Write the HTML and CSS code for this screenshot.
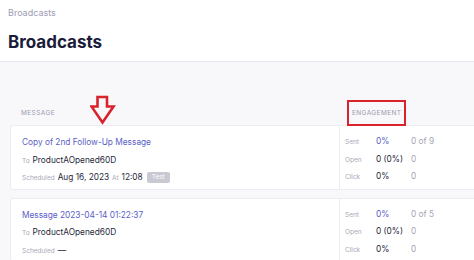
FILE: index.html
```html
<!DOCTYPE html>
<html>

<head>
    <title>Broadcasts</title>
    <link rel="stylesheet" href="styles.css">
</head>

<body>
    <div class="page-header">
        <div class="breadcrumb">Broadcasts</div>
        <h1>Broadcasts</h1>
    </div>

    <div class="content">
        <div class="table-head">
            <div class="col-message">Message</div>
            <div class="col-engagement"><span class="marked">Engagement</span></div>
            <svg class="arrow" width="28" height="34" viewBox="0 0 28 34">
                <path d="M7.5 3 H17 V12.5 H23.5 L12.5 28.5 L1.5 12.5 H7.5 Z" fill="none" stroke="#d8222c" stroke-width="2.6" stroke-linejoin="miter"/>
            </svg>
        </div>

        <div class="card">
            <div class="col-message">
                <div class="row"><a class="msg-title" href="#">Copy of 2nd Follow-Up Message</a></div>
                <div class="row"><span class="label">To</span> <span class="value">ProductAOpened60D</span></div>
                <div class="row">
                    <span class="label">Scheduled</span> <span class="value">Aug 16, 2023</span>
                    <span class="label">At</span> <span class="value">12:08</span>
                    <span class="badge">Test</span>
                </div>
            </div>
            <div class="col-engagement">
                <div class="stat"><span class="label">Sent</span><span class="pct blue">0%</span><span class="count">0 of 9</span></div>
                <div class="stat"><span class="label">Open</span><span class="pct">0 (0%)</span><span class="count">0</span></div>
                <div class="stat"><span class="label">Click</span><span class="pct">0%</span><span class="count">0</span></div>
            </div>
        </div>

        <div class="card">
            <div class="col-message">
                <div class="row"><a class="msg-title" href="#">Message 2023-04-14 01:22:37</a></div>
                <div class="row"><span class="label">To</span> <span class="value">ProductAOpened60D</span></div>
                <div class="row"><span class="label">Scheduled</span> <span class="value">&mdash;</span></div>
            </div>
            <div class="col-engagement">
                <div class="stat"><span class="label">Sent</span><span class="pct blue">0%</span><span class="count">0 of 5</span></div>
                <div class="stat"><span class="label">Open</span><span class="pct">0 (0%)</span><span class="count">0</span></div>
                <div class="stat"><span class="label">Click</span><span class="pct">0%</span><span class="count">0</span></div>
            </div>
        </div>
    </div>
</body>

</html>
```

FILE: styles.css
```css
body {
    margin: 0;
    font-family: Inter, "Noto Sans", sans-serif;
    background-color: #f8f8fb;
    overflow: hidden;
}

.page-header {
    height: 62px;
    box-sizing: border-box;
    padding: 7px 8px 0;
    background-color: #ffffff;
    border-bottom: 1px solid #e9e9ee;
}

.breadcrumb {
    font-size: 9px;
    line-height: 12px;
    color: #9c9cb2;
}

h1 {
    margin: 12px 0 0;
    font-size: 17px;
    line-height: 22px;
    font-weight: 700;
    color: #1b1c3a;
}

.content {
    padding: 39px 0 0 10px;
}

.table-head {
    position: relative;
    display: flex;
    align-items: center;
    height: 24px;
    font-size: 6.5px;
    letter-spacing: 0.4px;
    text-transform: uppercase;
    color: #9a9aae;
}

.table-head .col-message {
    width: 329px;
    padding-left: 11px;
    box-sizing: border-box;
}

.table-head .col-engagement {
    padding-left: 8px;
}

.marked {
    display: inline-block;
    padding: 7px 3px;
    line-height: 8px;
    border: 2.5px solid #d8222c;
}

.arrow {
    position: absolute;
    left: 80px;
    top: -7px;
}

.card {
    display: flex;
    width: 560px;
    margin-bottom: 8px;
    background-color: #ffffff;
    border: 1px solid #ececf1;
    border-radius: 3px;
}

.card .col-message {
    width: 328px;
    padding: 7px 0 3px 11px;
    box-sizing: border-box;
}

.card .col-engagement {
    padding: 7px 0 3px 5px;
    border-left: 1px solid #ececf1;
}

.row,
.stat {
    height: 17.5px;
    line-height: 17.5px;
    font-size: 10.5px;
    white-space: nowrap;
}

.msg-title {
    font-size: 8.3px;
    color: #5a5ec6;
    text-decoration: none;
}

.label {
    font-size: 6.5px;
    color: #a8a8b8;
}

.value {
    font-size: 8.3px;
    color: #27283a;
}

.badge {
    display: inline-block;
    margin-left: 1px;
    padding: 0 5px;
    line-height: 11px;
    font-size: 6.5px;
    color: #ffffff;
    background-color: #c9c9d3;
    border-radius: 2px;
    vertical-align: 1px;
}

.stat {
    display: flex;
    align-items: baseline;
}

.stat .label {
    width: 31px;
}

.pct {
    width: 35px;
    font-size: 8.3px;
    color: #27283a;
}

.pct.blue {
    color: #5a5ec6;
}

.count {
    font-size: 8.3px;
    color: #a5a5b6;
}
```
